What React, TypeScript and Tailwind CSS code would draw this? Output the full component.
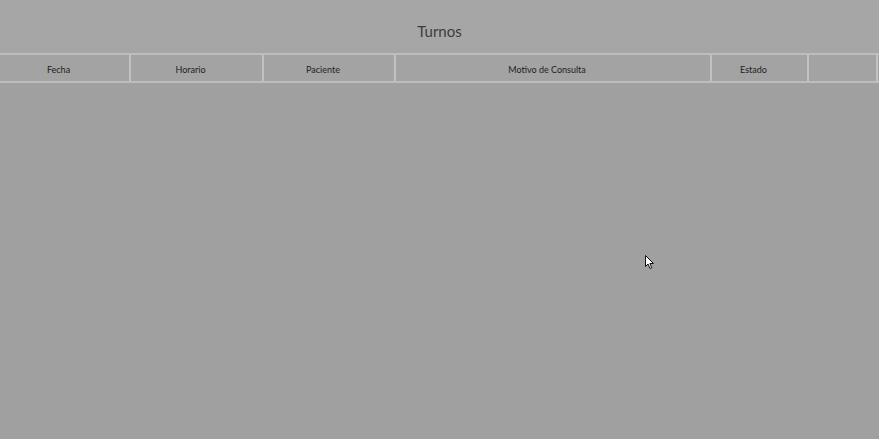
import React from "react";

const columns = [
  { label: "Fecha", w: "w-[131px]" },
  { label: "Horario", w: "w-[133px]" },
  { label: "Paciente", w: "w-[132px]" },
  { label: "Motivo de Consulta", w: "w-[316px]" },
  { label: "Estado", w: "w-[97px]" },
  { label: "", w: "w-[69px]" },
];

export default function App() {
  return (
    <div className="relative h-[439px] w-[879px] overflow-hidden bg-[#a0a0a0] font-['Lato','Open_Sans',sans-serif]">
      {/* Title */}
      <div className="flex h-[53px] items-center justify-center bg-[#a6a6a6] pt-[10px]">
        <h1 className="text-[15px] text-[#3c3c3c]">Turnos</h1>
      </div>

      {/* Table header */}
      <div className="flex h-[30px] border-y-2 border-[#bdbdbd] bg-[#a3a3a3]">
        {columns.map((c, i) => (
          <div
            key={i}
            className={`${c.w} flex items-center justify-center border-r-2 border-[#c2c2c2] pr-[12px] pt-[3px] text-[9px] text-[#1e1e1e]`}
          >
            {c.label}
          </div>
        ))}
      </div>

      {/* Mouse cursor */}
      <svg className="absolute left-[645px] top-[255px]" width="10" height="15" viewBox="0 0 10 15">
        <path d="M0.5 0.5 L0.5 11.5 L3 9 L5 13.5 L6.8 12.7 L4.9 8.5 L8.5 8.5 Z" fill="#fff" stroke="#111" strokeWidth="1" />
      </svg>
    </div>
  );
}
